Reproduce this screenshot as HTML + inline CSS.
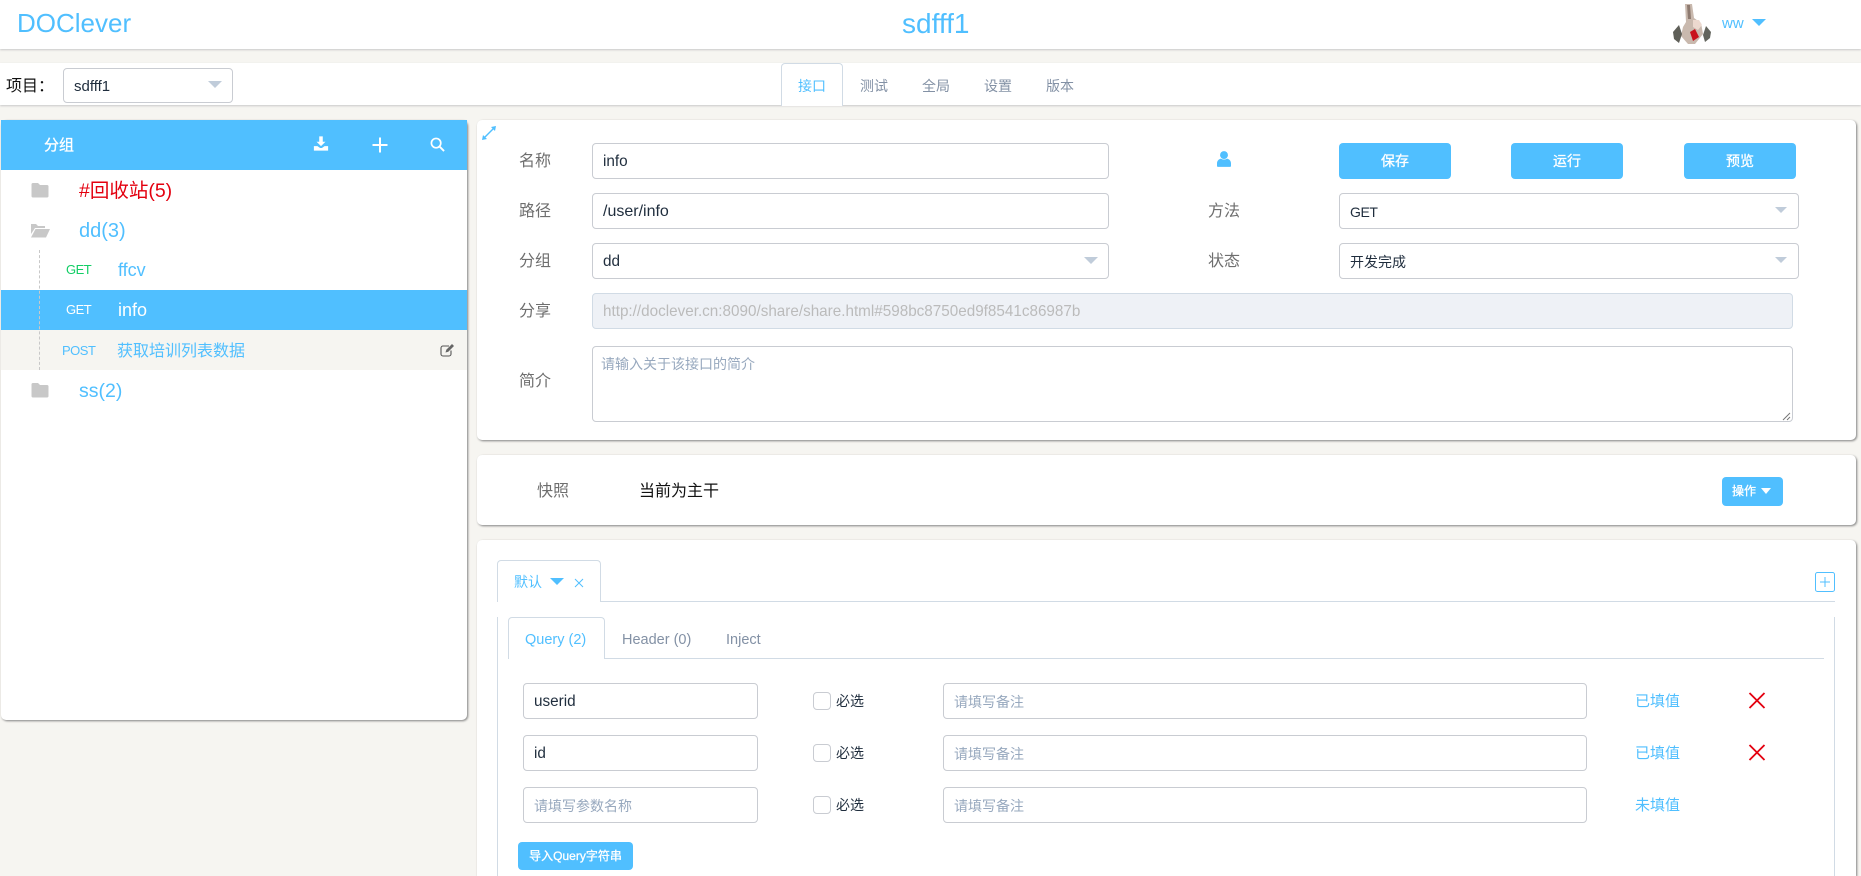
<!DOCTYPE html>
<html><head><meta charset="utf-8"><style>
*{box-sizing:border-box}
html,body{margin:0;padding:0;width:1861px;height:876px;overflow:hidden;background:#f6f5f1}
#w{position:relative;width:1861px;height:876px;overflow:hidden;background:#f6f5f1;font-family:"Liberation Sans","Noto Sans CJK SC",sans-serif;color:#1f2d3d;filter:blur(.35px)}
.a{position:absolute}
.t{position:absolute;white-space:nowrap;line-height:20px;height:20px}
.panel{position:absolute;background:#fff;border-radius:5px;box-shadow:1px 1px 2px #808080}
.in{position:absolute;background:#fff;border:1px solid #c9ccd2;border-radius:4px;height:36px;font-size:15.300px;line-height:36px;padding-left:10px;white-space:nowrap;color:#1f2d3d}
.in.ph{color:#97a8be;font-size:14px}
.in.cj{font-size:14px}
.btn{position:absolute;background:#50bfff;border-radius:4px;color:#fff;font-size:14px;text-align:center;line-height:36px;-webkit-text-stroke:.3px #fff}
.lab{position:absolute;font-size:16px;line-height:20px;color:#6e6e6e;white-space:nowrap}
.car{position:absolute;width:0;height:0;border-left:7px solid transparent;border-right:7px solid transparent;border-top:7px solid #c0ccda}
.blue{color:#50bfff}
.cb{position:absolute;left:813px;width:18px;height:18px;border:1px solid #c9ccd2;border-radius:4px;background:#fff}
.tb{position:absolute;font-size:14px;color:#8391a5;line-height:20px;white-space:nowrap}
.tb.blue{color:#50bfff}
.m{font-size:13px;letter-spacing:-.5px}
</style></head><body><div id="w">

<!-- header -->
<div class="a" style="left:0;top:0;width:1861px;height:49px;background:#fff;box-shadow:0 1px 2px #c8c8c8"></div>
<div class="t blue" style="left:17px;top:8px;height:30px;line-height:30px;font-size:26px">DOClever</div>
<div class="t blue" style="left:902px;top:9px;height:30px;line-height:30px;font-size:28px;">sdfff1</div>
<svg class="a" style="left:1672px;top:2px" width="40" height="44" viewBox="0 0 40 44">
<path d="M13 2h7l2 14 7 5 2 11-8 10h-7l-7-8 2-9 3-5z" fill="#c9b9ae"/>
<path d="M15 3h3l1 14h-3z" fill="#8d7a70"/>
<path d="M1 30l6-7 3 9-3 9-5-4z" fill="#5f5f58"/>
<path d="M39 30l-5-6-3 9 2 7 5-4z" fill="#62645d"/>
<path d="M18 30l5-3 4 8-6 4z" fill="#c8121c"/>
<path d="M21 18h6l3 5-4 5-5-3z" fill="#ecd9cf"/>
</svg>
<div class="t blue" style="left:1722px;top:14px;font-size:15px">ww</div>
<div class="a" style="left:1752px;top:19px;width:0;height:0;border-left:7px solid transparent;border-right:7px solid transparent;border-top:7px solid #50bfff"></div>

<!-- toolbar -->
<div class="a" style="left:0;top:63px;width:1861px;height:42px;background:#fff;box-shadow:0 1px 2px #c8c8c8"></div>
<div class="t" style="left:6px;top:77px;font-size:16px;color:#111">项目：</div>
<div class="in" style="left:63px;top:68px;width:170px;height:35px;line-height:35px;font-size:15px">sdfff1</div>
<div class="car" style="left:208px;top:81px"></div>
<div class="a" style="left:781px;top:63px;width:62px;height:43px;background:#fff;border:1px solid #d1dbe5;border-bottom:none;border-radius:4px 4px 0 0"></div>
<div class="tb blue" style="left:798px;top:76px">接口</div>
<div class="tb" style="left:860px;top:76px">测试</div>
<div class="tb" style="left:922px;top:76px">全局</div>
<div class="tb" style="left:984px;top:76px">设置</div>
<div class="tb" style="left:1046px;top:76px">版本</div>

<!-- sidebar -->
<div class="panel" style="left:1px;top:120px;width:466px;height:600px"></div>
<div class="a" style="left:1px;top:120px;width:466px;height:50px;background:#50bfff"></div>
<div class="t" style="left:44px;top:136px;font-size:15px;color:#fff;-webkit-text-stroke:.3px #fff">分组</div>
<svg class="a" style="left:313px;top:135px" width="16" height="17" viewBox="0 0 18 18"><path d="M7 1h4v6h3l-5 5-5-5h3z M1 12h4l3 2h2l3-2h4v5H1z" fill="#fff"/></svg>
<svg class="a" style="left:371px;top:136px" width="18" height="18" viewBox="0 0 18 18"><path d="M9 1.500v15M1.500 9h15" stroke="#fff" stroke-width="2"/></svg>
<svg class="a" style="left:430px;top:137px" width="15" height="15" viewBox="0 0 16 16"><circle cx="6.500" cy="6.500" r="5" fill="none" stroke="#fff" stroke-width="1.800"/><path d="M10.500 10.500L15 15" stroke="#fff" stroke-width="2"/></svg>

<svg class="a" style="left:31px;top:182px" width="18" height="16" viewBox="0 0 18 16"><path d="M2 1h5l2 2h7a1.500 1.500 0 0 1 1.500 1.500V14a1.500 1.500 0 0 1-1.500 1.500H2A1.500 1.500 0 0 1 .5 14V2.500A1.500 1.500 0 0 1 2 1z" fill="#c8c8c8"/></svg>
<div class="t" style="left:79px;top:180px;height:22px;line-height:22px;font-size:19.500px;color:#e3000f">#回收站(5)</div>

<svg class="a" style="left:30px;top:222px" width="20" height="16" viewBox="0 0 20 16"><path d="M1 2h5l2 2h7v2H5L1 12z M5.500 7H20l-4 8.500H1z" fill="#c8c8c8"/></svg>
<div class="t blue" style="left:79px;top:220px;height:22px;line-height:22px;font-size:20px">dd(3)</div>

<div class="a" style="left:39px;top:250px;height:120px;border-left:1px dashed #c8c8c8;z-index:3"></div>
<div class="t m" style="left:66px;top:260px;color:#13ce66">GET</div>
<div class="t blue" style="left:118px;top:260px;font-size:18px">ffcv</div>

<div class="a" style="left:1px;top:290px;width:466px;height:40px;background:#50bfff"></div>
<div class="t m" style="left:66px;top:300px;color:#fff;z-index:2">GET</div>
<div class="t" style="left:118px;top:300px;font-size:18px;color:#fff;z-index:2">info</div>

<div class="a" style="left:1px;top:330px;width:466px;height:40px;background:#f6f5f1"></div>
<div class="t blue m" style="left:62px;top:341px">POST</div>
<div class="t blue" style="left:117px;top:342px;font-size:16px">获取培训列表数据</div>
<svg class="a" style="left:440px;top:343px" width="15" height="14" viewBox="0 0 15 14"><path d="M11 7.500V11a2 2 0 0 1-2 2H3a2 2 0 0 1-2-2V5a2 2 0 0 1 2-2h6" fill="none" stroke="#555" stroke-width="1.100"/><path d="M5.500 9.500l.8-2.800L12 1l2 2-5.700 5.700z" fill="#666"/></svg>

<svg class="a" style="left:31px;top:382px" width="18" height="16" viewBox="0 0 18 16"><path d="M2 1h5l2 2h7a1.500 1.500 0 0 1 1.500 1.500V14a1.500 1.500 0 0 1-1.500 1.500H2A1.500 1.500 0 0 1 .5 14V2.500A1.500 1.500 0 0 1 2 1z" fill="#c8c8c8"/></svg>
<div class="t blue" style="left:79px;top:380px;height:22px;line-height:22px;font-size:19.500px">ss(2)</div>

<!-- panel 1 -->
<div class="panel" style="left:477px;top:120px;width:1379px;height:320px"></div>
<svg class="a" style="left:481px;top:125px" width="16" height="16" viewBox="0 0 16 16"><path d="M15 1l-1 5-1.500-1.500L4.500 12.500 6 14l-5 1 1-5 1.500 1.500 8-8L10 2z" fill="#50bfff"/></svg>
<div class="lab" style="left:519px;top:152px">名称</div>
<div class="lab" style="left:519px;top:202px">路径</div>
<div class="lab" style="left:519px;top:252px">分组</div>
<div class="lab" style="left:519px;top:302px">分享</div>
<div class="lab" style="left:519px;top:372px">简介</div>
<div class="in" style="left:592px;top:143px;width:517px">info</div>
<div class="in" style="left:592px;top:193px;width:517px;font-size:16px">/user/info</div>
<div class="in" style="left:592px;top:243px;width:517px">dd</div>
<div class="car" style="left:1084px;top:257px"></div>
<svg class="a" style="left:1217px;top:150px" width="14" height="18" viewBox="0 0 16 20"><circle cx="8" cy="5.500" r="4.500" fill="#50bfff"/><path d="M1 19a1 1 0 0 1-1-1v-3c0-3 2-5 4.500-5.500 2 1.500 5 1.500 7 0C14 10 16 12 16 15v3a1 1 0 0 1-1 1z" fill="#50bfff"/></svg>
<div class="btn" style="left:1339px;top:143px;width:112px">保存</div>
<div class="btn" style="left:1511px;top:143px;width:112px">运行</div>
<div class="btn" style="left:1684px;top:143px;width:112px">预览</div>
<div class="lab" style="left:1208px;top:202px">方法</div>
<div class="lab" style="left:1208px;top:252px">状态</div>
<div class="in cj" style="left:1339px;top:193px;width:460px;letter-spacing:-.4px">GET</div>
<div class="car" style="left:1775px;top:207px;border-left-width:6px;border-right-width:6px;border-top-width:6px"></div>
<div class="in cj" style="left:1339px;top:243px;width:460px">开发完成</div>
<div class="car" style="left:1775px;top:257px;border-left-width:6px;border-right-width:6px;border-top-width:6px"></div>
<div class="in" style="left:592px;top:293px;width:1201px;background:#eef1f6;border-color:#d1dbe5;color:#bbb;font-size:15.250px">http://doclever.cn:8090/share/share.html#598bc8750ed9f8541c86987b</div>
<div class="in ph" style="left:592px;top:346px;width:1201px;height:76px;padding-left:8px;line-height:34px">请输入关于该接口的简介</div>
<svg class="a" style="left:1782px;top:412px" width="9" height="9" viewBox="0 0 9 9"><path d="M8 1L1 8M8 5L5 8" stroke="#777" stroke-width="1"/></svg>

<!-- panel 2 -->
<div class="panel" style="left:477px;top:455px;width:1379px;height:70px"></div>
<div class="lab" style="left:537px;top:482px">快照</div>
<div class="lab" style="left:639px;top:482px;color:#111">当前为主干</div>
<div class="btn" style="left:1722px;top:477px;width:61px;height:29px;line-height:29px;font-size:12px;text-align:left;padding-left:10px">操作</div>
<div class="a" style="left:1761px;top:488px;width:0;height:0;border-left:5.500px solid transparent;border-right:5.500px solid transparent;border-top:6px solid #fff"></div>

<!-- panel 3 -->
<div class="panel" style="left:477px;top:540px;width:1379px;height:336px;border-radius:5px 5px 0 0"></div>
<div class="a" style="left:600px;top:601px;width:1235px;border-top:1px solid #d1dbe5"></div>
<div class="a" style="left:497px;top:560px;width:104px;height:42px;background:#fff;border:1px solid #d1dbe5;border-bottom:none;border-radius:4px 4px 0 0"></div>
<div class="tb blue" style="left:514px;top:572px">默认</div>
<div class="a" style="left:550px;top:578px;width:0;height:0;border-left:7px solid transparent;border-right:7px solid transparent;border-top:7px solid #50bfff"></div>
<svg class="a" style="left:574px;top:578px" width="10" height="10" viewBox="0 0 10 10"><path d="M1 1l8 8M9 1L1 9" stroke="#50bfff" stroke-width="1"/></svg>
<svg class="a" style="left:1815px;top:572px" width="20" height="20" viewBox="0 0 20 20"><rect x=".5" y=".5" width="19" height="19" rx="2" fill="#fff" stroke="#50bfff"/><path d="M10 5v10M5 10h10" stroke="#50bfff" stroke-width="1"/></svg>

<div class="a" style="left:497px;top:617px;height:259px;border-left:1px solid #d1dbe5"></div>
<div class="a" style="left:1834px;top:617px;height:259px;border-left:1px solid #d1dbe5"></div>
<div class="a" style="left:605px;top:658px;width:1219px;border-top:1px solid #d1dbe5"></div>
<div class="a" style="left:508px;top:617px;width:97px;height:42px;background:#fff;border:1px solid #d1dbe5;border-bottom:none;border-radius:4px 4px 0 0"></div>
<div class="tb blue" style="left:525px;top:630px;font-size:14.500px">Query (2)</div>
<div class="tb" style="left:622px;top:630px;font-size:14.500px">Header (0)</div>
<div class="tb" style="left:726px;top:630px;font-size:14.500px">Inject</div>

<div class="in" style="left:523px;top:683px;width:235px">userid</div>
<div class="in" style="left:523px;top:735px;width:235px">id</div>
<div class="in ph" style="left:523px;top:787px;width:235px">请填写参数名称</div>

<div class="cb" style="top:692px"></div>
<div class="cb" style="top:744px"></div>
<div class="cb" style="top:796px"></div>
<div class="t" style="left:836px;top:691px;font-size:14px">必选</div>
<div class="t" style="left:836px;top:743px;font-size:14px">必选</div>
<div class="t" style="left:836px;top:795px;font-size:14px">必选</div>

<div class="in ph" style="left:943px;top:683px;width:644px">请填写备注</div>
<div class="in ph" style="left:943px;top:735px;width:644px">请填写备注</div>
<div class="in ph" style="left:943px;top:787px;width:644px">请填写备注</div>

<div class="t blue" style="left:1635px;top:692px;font-size:15px">已填值</div>
<div class="t blue" style="left:1635px;top:744px;font-size:15px">已填值</div>
<div class="t blue" style="left:1635px;top:796px;font-size:15px">未填值</div>
<svg class="a" style="left:1748px;top:692px" width="18" height="17" viewBox="0 0 18 17"><path d="M1.500 1l15 15M16.500 1l-15 15" stroke="#e3000f" stroke-width="1.800"/></svg>
<svg class="a" style="left:1748px;top:744px" width="18" height="17" viewBox="0 0 18 17"><path d="M1.500 1l15 15M16.500 1l-15 15" stroke="#e3000f" stroke-width="1.800"/></svg>

<div class="btn" style="left:518px;top:842px;width:115px;height:28px;line-height:28px;font-size:12px">导入Query字符串</div>
</div></body></html>
